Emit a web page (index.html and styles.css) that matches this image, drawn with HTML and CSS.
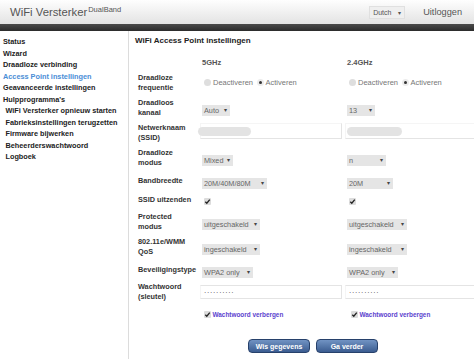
FILE: index.html
```html
<!DOCTYPE html>
<html lang="nl">
<head>
    <meta charset="UTF-8">
    <meta name="viewport" content="width=device-width, initial-scale=1.0">
    <title>WiFi Versterker DualBand</title>
    <link rel="stylesheet" href="styles.css">
</head>
<body>
    <!-- Top bar -->
    <header class="topbar">
        <div class="brand">WiFi Versterker<sup>DualBand</sup></div>
        <div class="top-right">
            <div class="lang">Dutch <span class="arrow">&#9662;</span></div>
            <a class="logout">Uitloggen</a>
        </div>
    </header>
    <div class="darkbar"></div>

    <div class="layout">
        <!-- Side menu -->
        <nav class="sidebar">
            <a class="menu-item">Status</a>
            <a class="menu-item">Wizard</a>
            <a class="menu-item">Draadloze verbinding</a>
            <a class="menu-item active">Access Point instellingen</a>
            <a class="menu-item">Geavanceerde instellingen</a>
            <a class="menu-item">Hulpprogramma's</a>
            <a class="menu-item sub">WiFi Versterker opnieuw starten</a>
            <a class="menu-item sub">Fabrieksinstellingen terugzetten</a>
            <a class="menu-item sub">Firmware bijwerken</a>
            <a class="menu-item sub">Beheerderswachtwoord</a>
            <a class="menu-item sub">Logboek</a>
        </nav>

        <!-- Settings -->
        <main class="content">
            <h2 class="page-title">WiFi Access Point instellingen</h2>
            <table class="settings">
                <colgroup>
                    <col class="col-label">
                    <col class="col-band">
                    <col class="col-band2">
                </colgroup>
                <tr class="row-head">
                    <td></td>
                    <td class="band">5GHz</td>
                    <td class="band band2">2.4GHz</td>
                </tr>
                <tr class="row-tall">
                    <td class="label">Draadloze<br>frequentie</td>
                    <td>
                        <div class="radios">
                            <span class="radio"></span><span class="radio-text">Deactiveren</span>
                            <span class="radio on"></span><span class="radio-text">Activeren</span>
                        </div>
                    </td>
                    <td>
                        <div class="radios second">
                            <span class="radio"></span><span class="radio-text">Deactiveren</span>
                            <span class="radio on"></span><span class="radio-text">Activeren</span>
                        </div>
                    </td>
                </tr>
                <tr class="row-tall">
                    <td class="label">Draadloos<br>kanaal</td>
                    <td><span class="sel w28">Auto <span class="arrow">&#9662;</span></span></td>
                    <td><span class="sel w28">13 <span class="arrow">&#9662;</span></span></td>
                </tr>
                <tr class="row-tall">
                    <td class="label">Netwerknaam<br>(SSID)</td>
                    <td><div class="field ssid"><span class="blur"></span></div></td>
                    <td><div class="field ssid wide"><span class="blur second"></span></div></td>
                </tr>
                <tr class="row-tall">
                    <td class="label">Draadloze<br>modus</td>
                    <td><span class="sel w31">Mixed <span class="arrow">&#9662;</span></span></td>
                    <td><span class="sel w39">n <span class="arrow">&#9662;</span></span></td>
                </tr>
                <tr class="row-mid">
                    <td class="label">Bandbreedte</td>
                    <td><span class="sel w65">20M/40M/80M <span class="arrow">&#9662;</span></span></td>
                    <td><span class="sel w46">20M <span class="arrow">&#9662;</span></span></td>
                </tr>
                <tr class="row-low">
                    <td class="label">SSID uitzenden</td>
                    <td><span class="chk"><svg viewBox="0 0 8 8"><path d="M1.5 4.2 L3.2 6 L6.6 1.8" fill="none" stroke="#222" stroke-width="1.5"/></svg></span></td>
                    <td><span class="chk"><svg viewBox="0 0 8 8"><path d="M1.5 4.2 L3.2 6 L6.6 1.8" fill="none" stroke="#222" stroke-width="1.5"/></svg></span></td>
                </tr>
                <tr class="row-tall">
                    <td class="label">Protected<br>modus</td>
                    <td><span class="sel w58">uitgeschakeld <span class="arrow">&#9662;</span></span></td>
                    <td><span class="sel w60">uitgeschakeld <span class="arrow">&#9662;</span></span></td>
                </tr>
                <tr class="row-tall">
                    <td class="label">802.11e/WMM<br>QoS</td>
                    <td><span class="sel w58">ingeschakeld <span class="arrow">&#9662;</span></span></td>
                    <td><span class="sel w60">ingeschakeld <span class="arrow">&#9662;</span></span></td>
                </tr>
                <tr class="row-mid">
                    <td class="label">Beveiligingstype</td>
                    <td><span class="sel w51">WPA2 only <span class="arrow">&#9662;</span></span></td>
                    <td><span class="sel w51">WPA2 only <span class="arrow">&#9662;</span></span></td>
                </tr>
                <tr class="row-pass">
                    <td class="label">Wachtwoord<br>(sleutel)</td>
                    <td><div class="field pass"><span class="dots">··········</span></div></td>
                    <td><div class="field pass wide"><span class="dots">··········</span></div></td>
                </tr>
                <tr class="row-mid">
                    <td></td>
                    <td>
                        <div class="hide-pass">
                            <span class="chk"><svg viewBox="0 0 8 8"><path d="M1.5 4.2 L3.2 6 L6.6 1.8" fill="none" stroke="#222" stroke-width="1.5"/></svg></span>
                            <a class="hide-link">Wachtwoord verbergen</a>
                        </div>
                    </td>
                    <td>
                        <div class="hide-pass second">
                            <span class="chk"><svg viewBox="0 0 8 8"><path d="M1.5 4.2 L3.2 6 L6.6 1.8" fill="none" stroke="#222" stroke-width="1.5"/></svg></span>
                            <a class="hide-link">Wachtwoord verbergen</a>
                        </div>
                    </td>
                </tr>
            </table>

            <div class="actions">
                <button class="btn">Wis gegevens</button>
                <button class="btn">Ga verder</button>
            </div>
        </main>
    </div>
</body>
</html>
```

FILE: styles.css
```css
* {
    box-sizing: border-box;
}
body {
    margin: 0;
    height: 359px;
    overflow: hidden;
    font-family: "Liberation Sans", Arial, sans-serif;
    background-color: #fff;
    color: #333;
}

/* Header */
.topbar {
    height: 24px;
    display: flex;
    align-items: center;
    justify-content: space-between;
    padding: 0 12px 0 10px;
    background: linear-gradient(#fefefe, #e3e3e3);
}
.brand {
    font-size: 11.3px;
    color: #555;
    line-height: 14px;
}
.brand sup {
    font-size: 7.5px;
    vertical-align: 4px;
    line-height: 0;
    margin-left: 1px;
}
.top-right {
    display: flex;
    align-items: center;
    gap: 18px;
}
.lang {
    width: 36px;
    height: 13px;
    display: flex;
    align-items: center;
    justify-content: space-between;
    padding: 0 3px;
    background-color: #efefef;
    border: 1px solid #e0e0e0;
    font-size: 7px;
    color: #555;
}
.lang .arrow {
    font-size: 6px;
    color: #555;
}
.logout {
    font-size: 9.2px;
    color: #555;
}
.darkbar {
    height: 7px;
    background: linear-gradient(#4a4a4a, #2b2b2b);
}

/* Layout */
.layout {
    display: flex;
    height: 328px;
}
.sidebar {
    width: 129px;
    flex-shrink: 0;
    border-right: 1px solid #dcdcdc;
    padding-top: 5px;
    display: flex;
    flex-direction: column;
}
.menu-item {
    font-size: 7.3px;
    font-weight: bold;
    line-height: 11.5px;
    padding-left: 3px;
    color: #222;
    white-space: nowrap;
}
.menu-item.sub {
    padding-left: 5.5px;
}
.menu-item.active {
    color: #4a8ed6;
}

.content {
    flex: 1;
    padding: 5px 0 0 6px;
}
.page-title {
    margin: 0;
    font-size: 8px;
    line-height: 10px;
    color: #222;
}

/* Settings table */
.settings {
    border-collapse: collapse;
    margin: 8px 0 0 3px;
    table-layout: fixed;
    width: 347px;
}
.col-label { width: 62px; }
.col-band { width: 145px; }
.col-band2 { width: 140px; }
.settings td {
    padding: 0;
    vertical-align: middle;
}
.row-head { height: 16px; }
.row-tall { height: 25px; }
.row-mid { height: 21px; }
.row-low { height: 15px; }
.row-pass { height: 24px; }

.band {
    font-size: 7.5px;
    font-weight: bold;
    color: #555;
    padding-left: 2px !important;
}
.label {
    font-size: 7.3px;
    font-weight: bold;
    line-height: 10px;
    color: #333;
    white-space: nowrap;
}

.radios {
    display: flex;
    align-items: center;
    padding-left: 4px;
    font-size: 7.5px;
    color: #777;
}
.radios.second {
    padding-left: 4px;
}
.radio {
    width: 7px;
    height: 7px;
    border-radius: 50%;
    background-color: #dedede;
    margin-right: 2px;
    position: relative;
}
.radio.on {
    background-color: #ececec;
    margin-left: 3.5px;
}
.radio.on::after {
    content: "";
    position: absolute;
    left: 2px;
    top: 2px;
    width: 3px;
    height: 3px;
    border-radius: 50%;
    background-color: #333;
}

.sel {
    display: inline-flex;
    align-items: center;
    justify-content: space-between;
    height: 11px;
    margin-left: 2px;
    padding: 0 3px 0 2px;
    background-color: #e5e5e5;
    font-size: 7.3px;
    color: #666;
    white-space: nowrap;
}
.sel .arrow {
    font-size: 5.5px;
    color: #444;
}
.w28 { width: 28px; }
.w31 { width: 31px; }
.w39 { width: 39px; }
.w46 { width: 46px; }
.w51 { width: 51px; }
.w58 { width: 58px; }
.w60 { width: 60px; }
.w65 { width: 65px; }

.chk {
    display: inline-flex;
    width: 7px;
    height: 7px;
    margin-left: 4px;
    background-color: #dcdcdc;
    border-radius: 1px;
}
.chk svg {
    width: 7px;
    height: 7px;
}

.field {
    width: 142px;
    display: flex;
    align-items: center;
    border: 1px solid #e4e4e4;
    border-left-color: #f5f5f5;
}
.field.wide {
    width: 140px;
    border-right: none;
}
.field.ssid {
    height: 16px;
    border-top-color: #f5f5f5;
    margin-top: -3px;
}
.blur {
    width: 53px;
    height: 9px;
    margin-left: -3px;
    border-radius: 5px;
    background-color: #e3e3e3;
}
.blur.second {
    margin-left: 1px;
    width: 55px;
}
.field.pass {
    height: 14px;
}
.dots {
    font-size: 7px;
    letter-spacing: 0.7px;
    color: #333;
    padding-left: 3px;
}

.hide-pass {
    display: flex;
    align-items: center;
    gap: 1.5px;
}
.hide-pass.second .chk {
    margin-left: 6px;
}
.hide-link {
    font-size: 6.4px;
    font-weight: bold;
    color: #5b3fce;
}

/* Buttons */
.actions {
    display: flex;
    gap: 6px;
    margin: 14px 0 0 113px;
}
.btn {
    width: 62px;
    height: 14px;
    padding: 0;
    border: 1px solid #27416b;
    border-radius: 4px;
    background: linear-gradient(#7193c3, #3b5c90);
    color: #fff;
    font-family: "Liberation Sans", Arial, sans-serif;
    font-size: 7px;
    font-weight: bold;
    cursor: pointer;
}
```
